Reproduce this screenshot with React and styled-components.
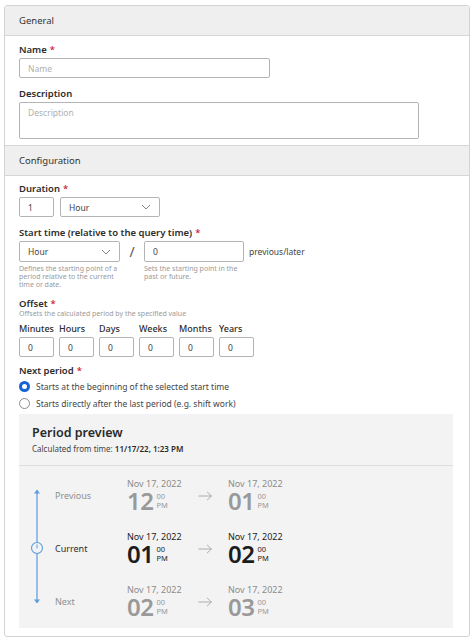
import React from 'react';
import styled, { createGlobalStyle } from 'styled-components';

const GlobalStyle = createGlobalStyle`
    body {
        margin: 0;
        background: #ffffff;
        font-family: "Noto Sans", "Open Sans", sans-serif;
        color: #333333;
    }
`;

const Card = styled.div`
    margin: 5px 4px 0 4px;
    width: 464px;
    border: 1px solid #d3d3d3;
    border-radius: 3px;
    overflow: hidden;
`;

const SectionHeader = styled.div`
    height: 29px;
    display: flex;
    align-items: center;
    padding-left: 14px;
    background: #efefef;
    border-bottom: 1px solid #d6d6d6;
    border-top: ${(p) => (p.$first ? 'none' : '1px solid #d6d6d6')};
    font-size: 9.5px;
    color: #333;
`;

const SectionBody = styled.div`
    padding: ${(p) => p.$pad || '7px 16px 7px 14px'};
`;

const Field = styled.div`
    margin-bottom: ${(p) => p.$mb || 0}px;
`;

const Label = styled.div`
    font-size: 9.5px;
    font-weight: 600;
    line-height: 13px;
    color: #2d2d2d;
    margin-bottom: ${(p) => (p.$mb === undefined ? 2 : p.$mb)}px;
`;

const Req = styled.span`
    color: #d0283b;
    margin-left: 3px;
`;

const Help = styled.div`
    font-size: 7px;
    line-height: 8px;
    color: #9a9a9a;
    white-space: nowrap;
`;

const Input = styled.input`
    display: block;
    box-sizing: border-box;
    width: ${(p) => p.$w}px;
    height: ${(p) => p.$h || 20}px;
    border: 1px solid #b4b4b4;
    border-radius: 2px;
    padding: 0 8px;
    margin: 0;
    font-family: inherit;
    font-size: 8.5px;
    color: #444;
    background: #fff;
    outline: none;
    &::placeholder {
        color: #b0b0b0;
    }
`;

const TextArea = styled.textarea`
    display: block;
    box-sizing: border-box;
    width: 400px;
    height: 37px;
    border: 1px solid #b4b4b4;
    border-radius: 2px;
    padding: 4px 8px;
    margin: 0;
    font-family: inherit;
    font-size: 8.5px;
    resize: none;
    outline: none;
    &::placeholder {
        color: #b0b0b0;
    }
`;

const SelectBox = styled.div`
    box-sizing: border-box;
    width: ${(p) => p.$w}px;
    height: ${(p) => p.$h || 20}px;
    border: 1px solid #b4b4b4;
    border-radius: 2px;
    padding: 0 8px;
    display: flex;
    align-items: center;
    justify-content: space-between;
    font-size: 8.5px;
    color: #444;
    background: #fff;
`;

const Row = styled.div`
    display: flex;
    align-items: center;
    gap: 6px;
`;

const StartGrid = styled.div`
    display: grid;
    grid-template-columns: 101px 24px 100px auto;
    align-items: center;
`;

const Slash = styled.div`
    text-align: center;
    font-size: 14px;
    line-height: 14px;
    color: #555;
`;

const Suffix = styled.div`
    font-size: 8.5px;
    color: #444;
    padding-left: 5px;
`;

const HelpCell = styled.div`
    align-self: start;
    padding-top: 3px;
`;

const OffsetGrid = styled.div`
    display: grid;
    grid-template-columns: repeat(6, 40px);
    row-gap: 2px;
    margin-top: 5px;
`;

const UnitLabel = styled.div`
    font-size: 9px;
    line-height: 12px;
    color: #2d2d2d;
    font-weight: 500;
`;

const RadioRow = styled.label`
    display: flex;
    align-items: center;
    gap: 6px;
    height: 17px;
    font-size: 8.5px;
    color: #444;
`;

const RadioDot = styled.span`
    box-sizing: border-box;
    width: 11px;
    height: 11px;
    border-radius: 50%;
    border: ${(p) => (p.$on ? '3px solid #1764d4' : '1px solid #8a8a8a')};
    background: #fff;
`;

const Preview = styled.div`
    margin-top: 2px;
    background: #f3f3f3;
`;

const PreviewHead = styled.div`
    padding: 10px 13px;
    border-bottom: 1px solid #dcdcdc;
`;

const PreviewTitle = styled.div`
    font-size: 12.5px;
    font-weight: 600;
    color: #2a2a2a;
    line-height: 18px;
`;

const PreviewSub = styled.div`
    margin-top: 1px;
    font-size: 8px;
    line-height: 12px;
    color: #444;
    b {
        font-weight: 600;
        color: #2a2a2a;
    }
`;

const Periods = styled.div`
    display: grid;
    grid-template-columns: 36px 72px 71px 30px 1fr;
    grid-auto-rows: 53px;
    align-items: center;
    padding-top: 3px;
`;

const Timeline = styled.svg`
    grid-row: 1 / span 3;
    grid-column: 1;
    align-self: stretch;
    width: 36px;
    height: 159px;
`;

const PeriodName = styled.div`
    font-size: 9px;
    color: ${(p) => (p.$current ? '#2d2d2d' : '#8f8f8f')};
`;

const DateBlock = styled.div`
    color: ${(p) => (p.$current ? '#1c1c1c' : '#999999')};
`;

const DateText = styled.div`
    font-size: 9px;
    line-height: 10px;
    color: ${(p) => (p.$current ? '#1c1c1c' : '#8c8c8c')};
`;

const TimeLine = styled.div`
    display: flex;
    align-items: center;
    gap: 3px;
    height: 24px;
`;

const Hour = styled.span`
    font-size: 24px;
    font-weight: 600;
    line-height: 24px;
    letter-spacing: -0.5px;
`;

const MinStack = styled.span`
    display: flex;
    flex-direction: column;
    font-size: 7.5px;
    line-height: 9px;
    margin-top: 1px;
`;

const ArrowCell = styled.div`
    display: flex;
    align-items: center;
`;

function Chevron() {
    return (
        <svg width="10" height="6" viewBox="0 0 10 6">
            <path d="M1 1l4 4 4-4" fill="none" stroke="#777" strokeWidth="0.9" />
        </svg>
    );
}

function RightArrow() {
    return (
        <svg width="15" height="10" viewBox="0 0 15 10">
            <path d="M0.5 5h13M9 0.8l4.4 4.2L9 9.2" fill="none" stroke="#a5a5a5" strokeWidth="0.9" />
        </svg>
    );
}

function Time({ date, hour, current }) {
    return (
        <DateBlock $current={current}>
            <DateText $current={current}>{date}</DateText>
            <TimeLine>
                <Hour>{hour}</Hour>
                <MinStack>
                    <span>00</span>
                    <span>PM</span>
                </MinStack>
            </TimeLine>
        </DateBlock>
    );
}

const periods = [
    { name: 'Previous', from: '12', to: '01' },
    { name: 'Current', from: '01', to: '02', current: true },
    { name: 'Next', from: '02', to: '03' },
];

export default function App() {
    return (
        <>
            <GlobalStyle />
            <Card>
                <SectionHeader $first>General</SectionHeader>
                <SectionBody $pad="7px 16px 6px 14px">
                    <Field $mb={9}>
                        <Label>
                            Name<Req>*</Req>
                        </Label>
                        <Input $w={251} placeholder="Name" />
                    </Field>
                    <Field>
                        <Label>Description</Label>
                        <TextArea placeholder="Description" />
                    </Field>
                </SectionBody>

                <SectionHeader>Configuration</SectionHeader>
                <SectionBody $pad="6px 16px 8px 14px">
                    <Field $mb={9}>
                        <Label>
                            Duration<Req>*</Req>
                        </Label>
                        <Row>
                            <Input $w={35} defaultValue="1" />
                            <SelectBox $w={100}>
                                Hour <Chevron />
                            </SelectBox>
                        </Row>
                    </Field>

                    <Field $mb={8}>
                        <Label>
                            Start time (relative to the query time)<Req>*</Req>
                        </Label>
                        <StartGrid>
                            <SelectBox $w={101} $h={21}>
                                Hour <Chevron />
                            </SelectBox>
                            <Slash>/</Slash>
                            <Input $w={100} $h={21} defaultValue="0" />
                            <Suffix>previous/later</Suffix>
                            <HelpCell>
                                <Help>Defines the starting point of a</Help>
                                <Help>period relative to the current</Help>
                                <Help>time or date.</Help>
                            </HelpCell>
                            <div />
                            <HelpCell>
                                <Help>Sets the starting point in the</Help>
                                <Help>past or future.</Help>
                            </HelpCell>
                        </StartGrid>
                    </Field>

                    <Field $mb={7}>
                        <Label $mb={0}>
                            Offset<Req>*</Req>
                        </Label>
                        <Help>Offsets the calculated period by the specified value</Help>
                        <OffsetGrid>
                            {['Minutes', 'Hours', 'Days', 'Weeks', 'Months', 'Years'].map((u) => (
                                <UnitLabel key={u}>{u}</UnitLabel>
                            ))}
                            {[0, 1, 2, 3, 4, 5].map((i) => (
                                <Input key={i} $w={35} defaultValue="0" />
                            ))}
                        </OffsetGrid>
                    </Field>

                    <Field>
                        <Label $mb={1}>
                            Next period<Req>*</Req>
                        </Label>
                        <RadioRow>
                            <RadioDot $on />
                            Starts at the beginning of the selected start time
                        </RadioRow>
                        <RadioRow>
                            <RadioDot />
                            Starts directly after the last period (e.g. shift work)
                        </RadioRow>
                    </Field>

                    <Preview>
                        <PreviewHead>
                            <PreviewTitle>Period preview</PreviewTitle>
                            <PreviewSub>
                                Calculated from time: <b>11/17/22, 1:23 PM</b>
                            </PreviewSub>
                        </PreviewHead>
                        <Periods>
                            <Timeline viewBox="0 0 36 159">
                                <path d="M18 22V133" stroke="#5a9be0" strokeWidth="1.2" />
                                <path d="M15.5 24.5L18 21l2.5 3.5" fill="#5a9be0" stroke="#5a9be0" strokeWidth="0.8" />
                                <path d="M15.5 130.5L18 134l2.5-3.5" fill="#5a9be0" stroke="#5a9be0" strokeWidth="0.8" />
                                <circle cx="18" cy="79" r="5.5" fill="#f3f3f3" stroke="#5a9be0" strokeWidth="1.1" />
                                <path d="M18 75.5V79.5" stroke="#5a9be0" strokeWidth="1" />
                            </Timeline>
                            {periods.map((p) => (
                                <React.Fragment key={p.name}>
                                    <PeriodName $current={p.current}>{p.name}</PeriodName>
                                    <Time date="Nov 17, 2022" hour={p.from} current={p.current} />
                                    <ArrowCell>
                                        <RightArrow />
                                    </ArrowCell>
                                    <Time date="Nov 17, 2022" hour={p.to} current={p.current} />
                                </React.Fragment>
                            ))}
                        </Periods>
                    </Preview>
                </SectionBody>
            </Card>
        </>
    );
}
